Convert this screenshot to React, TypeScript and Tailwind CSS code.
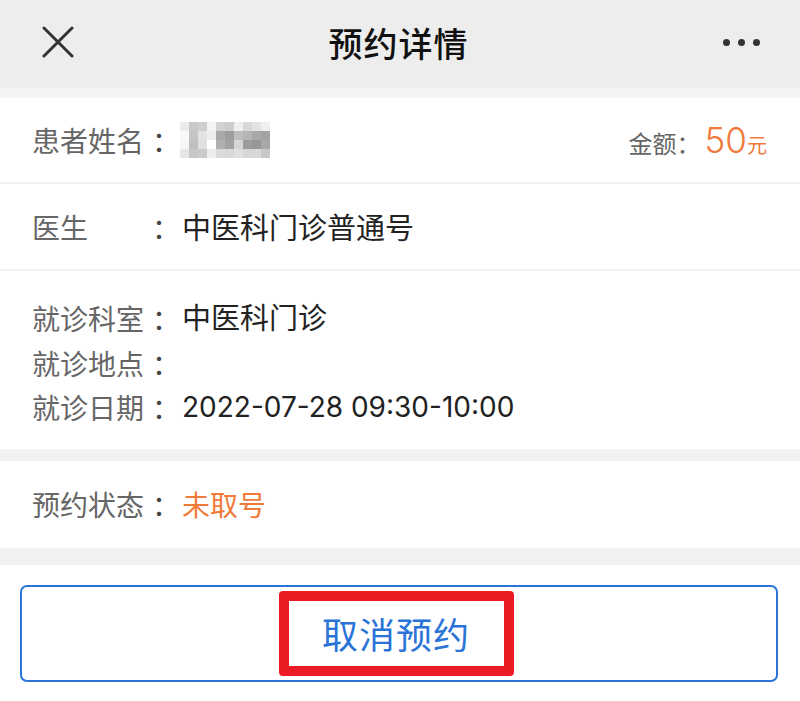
const cjk = "font-['Noto_Sans_CJK_SC',sans-serif]";
const mixed = "font-['Inter','Noto_Sans_CJK_SC',sans-serif]";

// pixelated name (mosaic)
const mosaic = [
  ["#ececec", "#c8c8c8", "#cfcfcf", "#f4f4f4", "#d2d2d2", "#cdcdcd", "#eeeeee", "#d8d8d8", "#e2e2e2", "#f0f0f0"],
  ["#f8f8f8", "#c4c4c4", "#e4e4e4", "#eeeeee", "#a9a9a9", "#9e9e9e", "#bdbdbd", "#b5b5b5", "#a8a8a8", "#a2a2a2"],
  ["#f6f6f6", "#c0c0c0", "#e0e0e0", "#ffffff", "#b0b0b0", "#a2a2a2", "#d6d6d6", "#9c9c9c", "#979797", "#a8a8a8"],
  ["#e6e6e6", "#c6c6c6", "#cacaca", "#eeeeee", "#dadada", "#d8d8d8", "#e0e0e0", "#d6d6d6", "#d8d8d8", "#c8c8c8"],
];

function Label({ text }: { text: string }) {
  return (
    <div className="flex items-center shrink-0">
      <span className="w-[112px] whitespace-nowrap text-[#666]">{text}</span>
      <span className="w-[28px] ml-[8px] text-[#444]">：</span>
    </div>
  );
}

function InfoLine({ label, value, size = "text-[29px]" }: { label: string; value?: string; size?: string }) {
  return (
    <div className="flex items-center h-[44.5px]">
      <Label text={label} />
      <span className={`ml-[2px] ${size} text-[#222] ${mixed}`}>{value}</span>
    </div>
  );
}

export default function App() {
  return (
    <div className={`w-[800px] min-h-screen bg-white ${cjk}`}>
      {/* Nav bar */}
      <header className="h-[88px] bg-[#ededed] flex items-center justify-between px-[42px]">
        <svg width="32" height="32" viewBox="0 0 32 32" className="-mt-1">
          <path d="M2 2 L30 30 M30 2 L2 30" stroke="#333" strokeWidth="3" strokeLinecap="round" />
        </svg>
        <h1 className="text-[34px] font-medium text-[#111] tracking-[1px] -mt-1">预约详情</h1>
        <div className="flex items-center gap-[8px] mr-[-2px] -mt-1">
          <span className="w-[7px] h-[7px] rounded-full bg-[#333]" />
          <span className="w-[7px] h-[7px] rounded-full bg-[#333]" />
          <span className="w-[7px] h-[7px] rounded-full bg-[#333]" />
        </div>
      </header>
      <div className="h-[10px] bg-[#f4f4f4]" />

      {/* Patient */}
      <section className="h-[86px] flex items-center justify-between pl-8 pr-[33px] text-[28px] border-b-2 border-[#f2f2f2]">
        <div className="flex items-center">
          <span className="text-[#666]">患者姓名</span>
          <span className="w-[28px] ml-[8px] text-[#444]">：</span>
          <div className="grid grid-cols-10">
            {mosaic.flat().map((c, i) => (
              <span key={i} className="w-[9px] h-[9px]" style={{ backgroundColor: c }} />
            ))}
          </div>
        </div>
        <div className="flex items-baseline">
          <span className="text-[24px] text-[#666]">金额：</span>
          <span className={`text-[35px] font-light text-[#f07a3a] ml-[4px] ${mixed}`}>50</span>
          <span className="text-[20px] text-[#f07a3a]">元</span>
        </div>
      </section>

      {/* Doctor */}
      <section className="h-[87px] flex items-center pl-8 text-[28px] border-b-2 border-[#f2f2f2]">
        <Label text="医生" />
        <span className="ml-[2px] text-[29px] text-[#222]">中医科门诊普通号</span>
      </section>

      {/* Visit info */}
      <section className="pl-8 pt-[25px] pb-[19px] text-[28px]">
        <InfoLine label="就诊科室" value="中医科门诊" />
        <InfoLine label="就诊地点" />
        <InfoLine label="就诊日期" value="2022-07-28 09:30-10:00" size="text-[28px]" />
      </section>
      <div className="h-[12px] bg-[#f2f2f2]" />

      {/* Status */}
      <section className="h-[87px] flex items-center pl-8 text-[28px]">
        <Label text="预约状态" />
        <span className="text-[#f07a3a] ml-[2px]">未取号</span>
      </section>
      <div className="h-[17px] bg-[#f2f2f2]" />

      {/* Action */}
      <div className="pt-5 pl-[20px] pr-[22px] pb-4">
        <button className="w-full h-[97px] flex items-center justify-center border-2 border-[#2a74d8] rounded-[7px] bg-white">
          <span className="w-[235px] h-[85px] flex items-center justify-center border-[10px] border-[#ec1c24] rounded-[4px] mr-[6px]">
            <span className="text-[36px] text-[#2a74d8] tracking-[1px]">取消预约</span>
          </span>
        </button>
      </div>
    </div>
  );
}
